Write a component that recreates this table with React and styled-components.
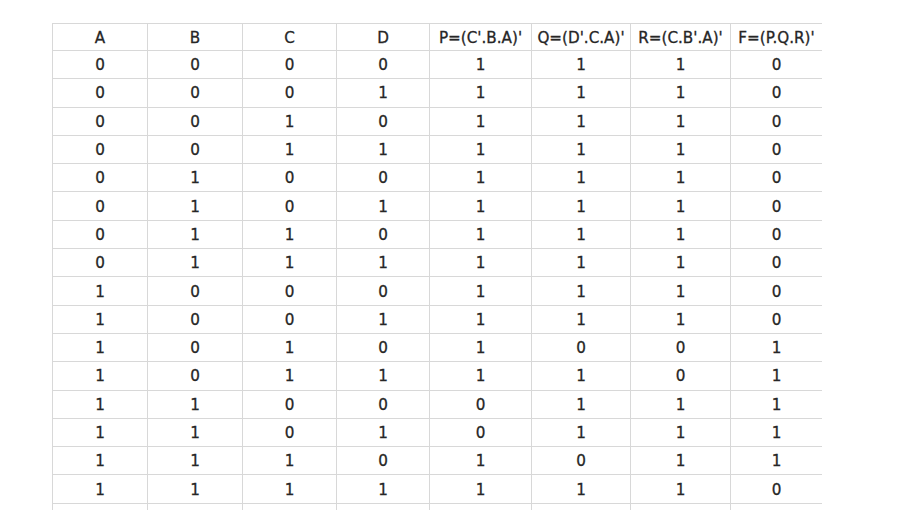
import React from "react";
import styled, { createGlobalStyle } from "styled-components";

const GlobalStyle = createGlobalStyle`
  html, body {
    margin: 0;
    padding: 0;
    background: #fff;
  }
  body {
    width: 913px;
    height: 510px;
    overflow: hidden;
  }
`;

const Page = styled.div`
  padding: 23px 0 0 52px;
  height: 510px;
  box-sizing: border-box;
  overflow: hidden;
`;

const Sheet = styled.div`
  display: grid;
  grid-template-columns: 95px 95px 94px 93px 102px 99px 100px 92px;
  grid-template-rows: 27px repeat(17, 28.3px);
  width: 770px;
  font-family: "DejaVu Sans", "Liberation Sans", sans-serif;
  font-size: 15.2px;
  color: #262626;
  -webkit-text-stroke: 0.3px #262626;
`;

const Cell = styled.div`
  display: flex;
  align-items: center;
  justify-content: center;
  box-sizing: border-box;
  border-top: 1px solid #d8d8d8;
  border-left: 1px solid #d8d8d8;
  padding-top: ${({ header }) => (header ? "2px" : "1px")};
  white-space: nowrap;
  overflow: hidden;
`;

const headers = [
  "A",
  "B",
  "C",
  "D",
  "P=(C'.B.A)'",
  "Q=(D'.C.A)'",
  "R=(C.B'.A)'",
  "F=(P.Q.R)'",
];

const rows = [
  "00001110",
  "00011110",
  "00101110",
  "00111110",
  "01001110",
  "01011110",
  "01101110",
  "01111110",
  "10001110",
  "10011110",
  "10101001",
  "10111101",
  "11000111",
  "11010111",
  "11101011",
  "11111110",
];

const App = () => (
  <>
    <GlobalStyle />
    <Page>
      <Sheet>
        {headers.map((label) => (
          <Cell key={label} header>
            {label}
          </Cell>
        ))}
        {rows.map((row, r) =>
          row.split("").map((value, c) => (
            // eslint-disable-next-line react/no-array-index-key
            <Cell key={`${r}-${c}`}>{value}</Cell>
          )),
        )}
        {headers.map((label) => (
          <Cell key={`blank-${label}`} />
        ))}
      </Sheet>
    </Page>
  </>
);

export default App;
